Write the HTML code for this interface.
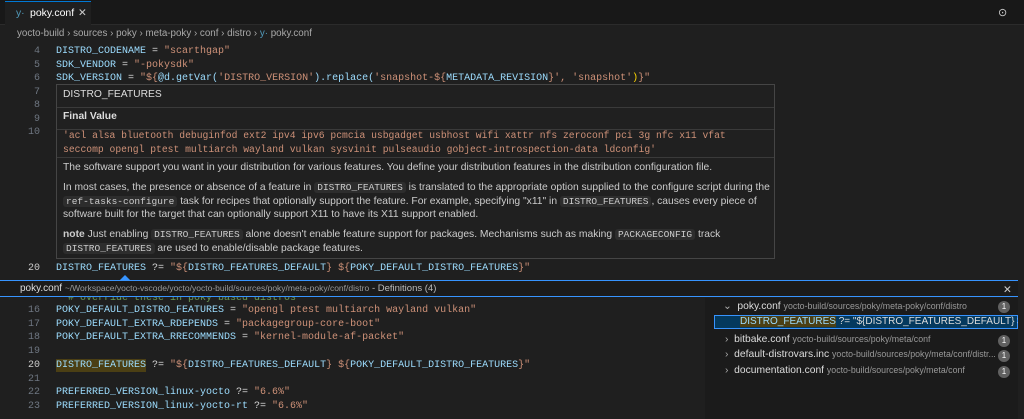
<!DOCTYPE html>
<html><head><meta charset="utf-8"><style>
*{margin:0;padding:0;box-sizing:border-box}
body{width:1024px;height:419px;background:#1f1f1f;overflow:hidden;position:relative;font-family:"Liberation Sans",sans-serif;color:#ccc}
.abs{position:absolute}
.mono{font-family:"Liberation Mono",monospace;font-size:10px;white-space:pre}
.ln{position:absolute;left:0;width:40px;text-align:right;color:#6e7681}
.code{position:absolute;left:56px}
.k{color:#9cdcfe}.s{color:#ce9178}.o{color:#d4d4d4}.c{color:#6a9955}.y{color:#ffd700}
.ui{font-size:10.3px;white-space:nowrap}
.ic{background:#2d2d2d;border-radius:3px;padding:0 3px;font-family:"Liberation Mono",monospace;font-size:9.5px;color:#ccc}
.badge{position:absolute;right:14px;width:12px;height:12px;border-radius:6px;background:#616161;color:#fff;font-size:8px;text-align:center;line-height:12px}
</style></head><body>
<div class="abs" style="left:0;top:0;width:1024px;height:25px;background:#181818;border-bottom:1px solid #2b2b2b"></div>
<div class="abs" style="left:5px;top:1px;width:86px;height:25px;background:#1f1f1f;border-top:1px solid #0078d4"></div>
<div class="abs ui" style="left:16px;top:8px;color:#519aba">y·</div>
<div class="abs ui" style="left:30px;top:7px;color:#fff;font-size:10.5px">poky.conf</div>
<div class="abs ui" style="left:78px;top:7px;color:#ccc">✕</div>
<div class="abs ui" style="left:998px;top:6px;color:#ccc;font-size:11px">⊙</div>
<div class="abs ui" style="left:17px;top:28px;color:#a9a9a9;font-size:9.8px">yocto-build › sources › poky › meta-poky › conf › distro › <span style="color:#519aba">y·</span> poky.conf</div>
<div class="mono">
<div class="ln" style="top:46px">4</div><div class="code" style="top:46px"><span class="k">DISTRO_CODENAME</span><span class="o"> = </span><span class="s">"scarthgap"</span></div>
<div class="ln" style="top:59.5px">5</div><div class="code" style="top:59.5px"><span class="k">SDK_VENDOR</span><span class="o"> = </span><span class="s">"-pokysdk"</span></div>
<div class="ln" style="top:73px">6</div><div class="code" style="top:73px"><span class="k">SDK_VERSION</span><span class="o"> = </span><span class="s">"${</span><span class="k">@d.getVar(</span><span class="s">'DISTRO_VERSION'</span><span class="k">).replace(</span><span class="s">'snapshot-${</span><span class="k">METADATA_REVISION</span><span class="s">}', 'snapshot'</span><span class="y">)</span><span class="s">}"</span></div>
<div class="ln" style="top:86.5px">7</div><div class="ln" style="top:100px">8</div><div class="ln" style="top:113.5px">9</div><div class="ln" style="top:127px">10</div>
<div class="ln" style="top:263px;color:#ccc">20</div><div class="code" style="top:263px"><span class="k">DISTRO_FEATURES</span><span class="o"> ?= </span><span class="s">"${</span><span class="k">DISTRO_FEATURES_DEFAULT</span><span class="s">} ${</span><span class="k">POKY_DEFAULT_DISTRO_FEATURES</span><span class="s">}"</span></div>
</div>
<div class="abs" style="left:56px;top:84px;width:719px;height:175px;background:#202020;border:1px solid #454545"></div>
<div class="abs" style="left:57px;top:107px;width:717px;height:1px;background:#3a3a3a"></div>
<div class="abs" style="left:57px;top:129px;width:717px;height:1px;background:#3a3a3a"></div>
<div class="abs" style="left:57px;top:157px;width:717px;height:1px;background:#3a3a3a"></div>
<div class="abs ui" style="left:63px;top:89px;color:#ddd">DISTRO_FEATURES</div>
<div class="abs ui" style="left:63px;top:111px;color:#ddd;font-weight:bold">Final Value</div>
<div class="abs mono s" style="left:63px;top:129px;line-height:13.5px;font-size:9.7px">'acl alsa bluetooth debuginfod ext2 ipv4 ipv6 pcmcia usbgadget usbhost wifi xattr nfs zeroconf pci 3g nfc x11 vfat
seccomp opengl ptest multiarch wayland vulkan sysvinit pulseaudio gobject-introspection-data ldconfig'</div>
<div class="abs ui" style="left:63px;top:162px">The software support you want in your distribution for various features. You define your distribution features in the distribution configuration file.</div>
<div class="abs ui" style="left:63px;top:181px;line-height:13.7px">In most cases, the presence or absence of a feature in <span class="ic">DISTRO_FEATURES</span> is translated to the appropriate option supplied to the configure script during the<br><span class="ic">ref-tasks-configure</span> task for recipes that optionally support the feature. For example, specifying "x11" in <span class="ic">DISTRO_FEATURES</span>, causes every piece of<br>software built for the target that can optionally support X11 to have its X11 support enabled.</div>
<div class="abs ui" style="left:63px;top:228px;line-height:14px"><b>note</b> Just enabling <span class="ic">DISTRO_FEATURES</span> alone doesn't enable feature support for packages. Mechanisms such as making <span class="ic">PACKAGECONFIG</span> track<br><span class="ic">DISTRO_FEATURES</span> are used to enable/disable package features.</div>
<!-- peek -->
<div class="abs" style="left:0;top:280px;width:1018px;height:139px;background:#1f1f1f;border-top:1px solid #3794ff"></div>
<div class="abs" style="left:0;top:298px;width:705px;height:121px;background:#1f1f1f"></div>
<div class="abs" style="left:705px;top:298px;width:313px;height:121px;background:#1b1b1b"></div>
<div class="mono">
<div class="code c" style="top:293px">  # override these in poky based distros</div>
<div class="ln" style="top:305px">16</div><div class="code" style="top:305px"><span class="k">POKY_DEFAULT_DISTRO_FEATURES</span><span class="o"> = </span><span class="s">"opengl ptest multiarch wayland vulkan"</span></div>
<div class="ln" style="top:318.7px">17</div><div class="code" style="top:318.7px"><span class="k">POKY_DEFAULT_EXTRA_RDEPENDS</span><span class="o"> = </span><span class="s">"packagegroup-core-boot"</span></div>
<div class="ln" style="top:332.4px">18</div><div class="code" style="top:332.4px"><span class="k">POKY_DEFAULT_EXTRA_RRECOMMENDS</span><span class="o"> = </span><span class="s">"kernel-module-af-packet"</span></div>
<div class="ln" style="top:346px">19</div>
<div class="abs" style="left:56px;top:359px;width:90px;height:13px;background:#4b3f14"></div>
<div class="ln" style="top:359.8px;color:#ccc">20</div><div class="code" style="top:359.8px"><span class="k">DISTRO_FEATURES</span><span class="o"> ?= </span><span class="s">"${</span><span class="k">DISTRO_FEATURES_DEFAULT</span><span class="s">} ${</span><span class="k">POKY_DEFAULT_DISTRO_FEATURES</span><span class="s">}"</span></div>
<div class="ln" style="top:373.5px">21</div>
<div class="ln" style="top:387.2px">22</div><div class="code" style="top:387.2px"><span class="k">PREFERRED_VERSION_linux-yocto</span><span class="o"> ?= </span><span class="s">"6.6%"</span></div>
<div class="ln" style="top:401px">23</div><div class="code" style="top:401px"><span class="k">PREFERRED_VERSION_linux-yocto-rt</span><span class="o"> ?= </span><span class="s">"6.6%"</span></div>
</div>
<div class="abs" style="left:0;top:281px;width:1018px;height:16px;background:#1b1b1b;border-bottom:1px solid #3794ff"></div>
<div class="abs" style="left:120px;top:275px;width:0;height:0;border-left:5px solid transparent;border-right:5px solid transparent;border-bottom:5px solid #3794ff"></div>
<div class="abs ui" style="left:20px;top:283px;font-size:10px;color:#ddd">poky.conf <span style="font-size:8.5px;color:#999">~/Workspace/yocto-vscode/yocto/yocto-build/sources/poky/meta-poky/conf/distro</span> <span style="font-size:9.5px;color:#bbb">- Definitions (4)</span></div>
<div class="abs ui" style="left:1003px;top:284px;color:#ccc">✕</div>
<div class="abs ui" style="left:723px;top:300px;font-size:10.3px;color:#ddd"><span style="color:#aaa">⌄</span>&nbsp; poky.conf <span style="font-size:8.8px;color:#999">yocto-build/sources/poky/meta-poky/conf/distro</span></div>
<div class="badge" style="top:301px">1</div>
<div class="abs" style="left:714px;top:315px;width:304px;height:14px;background:#04395e;border:1px solid #3794ff"></div>
<div class="abs ui" style="left:740px;top:316px;font-size:10px;color:#ddd;overflow:hidden;width:278px"><span style="background:#4b3f14;color:#9cdcfe">DISTRO_FEATURES</span> ?= "${DISTRO_FEATURES_DEFAULT} ${POKY_DEFAULT_DISTRO_FEATURES}"</div>
<div class="abs ui" style="left:725px;top:334px;font-size:10.3px;color:#ddd"><span style="color:#aaa">›</span>&nbsp; bitbake.conf <span style="font-size:8.8px;color:#999">yocto-build/sources/poky/meta/conf</span></div>
<div class="badge" style="top:335px">1</div>
<div class="abs ui" style="left:725px;top:349px;font-size:10.3px;color:#ddd"><span style="color:#aaa">›</span>&nbsp; default-distrovars.inc <span style="font-size:8.8px;color:#999">yocto-build/sources/poky/meta/conf/distr...</span></div>
<div class="badge" style="top:350px">1</div>
<div class="abs ui" style="left:725px;top:365px;font-size:10.3px;color:#ddd"><span style="color:#aaa">›</span>&nbsp; documentation.conf <span style="font-size:8.8px;color:#999">yocto-build/sources/poky/meta/conf</span></div>
<div class="badge" style="top:366px">1</div>
</body></html>
